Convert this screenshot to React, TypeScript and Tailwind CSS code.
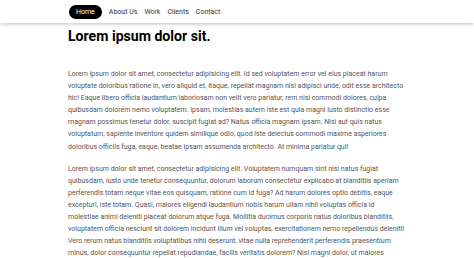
const links = ["About Us", "Work", "Clients", "Contact"];

const paragraphs = [
  "Lorem ipsum dolor sit amet, consectetur adipisicing elit. Id sed voluptatem error vel eius placeat harum voluptate doloribus ratione in, vero aliquid et, itaque, repellat magnam nisi adipisci unde, odit esse architecto hic! Eaque libero officia laudantium laboriosam non velit vero pariatur, rem nisi commodi dolores, culpa quibusdam dolorem nemo voluptatem. Ipsam, molestias autem iste est quia magni iusto distinctio esse magnam possimus tenetur dolor, suscipit fugiat ad? Natus officia magnam ipsam. Nisi aut quis natus voluptatum, sapiente inventore quidem similique odio, quod iste delectus commodi maxime asperiores doloribus officiis fuga, eaque, beatae ipsam assumenda architecto. At minima pariatur qui!",
  "Lorem ipsum dolor sit amet, consectetur adipisicing elit. Voluptatem numquam sint nisi natus fugiat quibusdam, iusto unde tenetur consequuntur, dolorum laborum consectetur explicabo at blanditiis aperiam perferendis totam neque vitae eos quisquam, ratione cum id fuga? Ad harum dolores optio debitis, eaque excepturi, iste totam. Quasi, maiores eligendi laudantium nobis harum ullam nihil voluptas officia id molestiae animi deleniti placeat dolorum atque fuga. Mollitia ducimus corporis natus doloribus blanditiis, voluptatem officia nesciunt sit dolorem incidunt illum vel voluptas, exercitationem nemo repellendus deleniti! Vero rerum natus blanditiis voluptatibus nihil deserunt, vitae nulla reprehenderit perferendis praesentium minus, dolor consequuntur repellat repudiandae, facilis veritatis dolorem? Nisi magni dolor, ut maiores",
];

export default function App() {
  return (
    <div className="min-h-screen bg-white font-['Roboto',sans-serif]">
      <header className="h-[23px] bg-white shadow-[0_1px_4px_rgba(0,0,0,0.25)]">
        <nav className="mx-auto flex h-full max-w-[338px] items-center gap-[5px] pl-[1px]">
          <a className="mr-[1px] rounded-full bg-black px-[7px] py-[2px] text-[7px] leading-[10px] text-white">
            Home
          </a>
          {links.map((l) => (
            <a key={l} className="px-[1px] text-[7px] leading-[10px] text-[#333]">
              {l}
            </a>
          ))}
        </nav>
      </header>

      <main className="mx-auto max-w-[338px]">
        <h1 className="mt-[3px] text-[14.1px] font-bold leading-[20px] text-black">
          Lorem ipsum dolor sit.
        </h1>
        <div className="mt-[22px] space-y-[10px]">
          {paragraphs.map((p, i) => (
            <p key={i} className="text-[7px] leading-[12.1px] text-[#555]">
              {p}
            </p>
          ))}
        </div>
      </main>
    </div>
  );
}
